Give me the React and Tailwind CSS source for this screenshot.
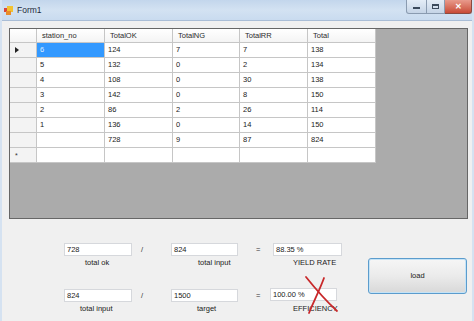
import React from "react";

const cols = ["station_no", "TotalOK", "TotalNG", "TotalRR", "Total"];
const rows = [
    ["6", "124", "7", "7", "138"],
    ["5", "132", "0", "2", "134"],
    ["4", "108", "0", "30", "138"],
    ["3", "142", "0", "8", "150"],
    ["2", "86", "2", "26", "114"],
    ["1", "136", "0", "14", "150"],
    ["", "728", "9", "87", "824"],
    ["", "", "", "", ""],
];

const cell = "h-[15px] border-r border-b border-[#c6c6c6] px-[3px] leading-[14px] text-[7.5px] text-[#1a1a1a]";
const head = "h-[14px] border-r border-b border-[#c6c6c6] px-[5px] leading-[13px] text-[7.5px] text-[#2a2a2a] bg-gradient-to-b from-white to-[#f4f4f4]";

function TitleBar() {
    return (
        <div className="h-[21px] flex items-start bg-gradient-to-b from-[#c3d6ec] via-[#d3e2f2] to-[#c9dbef] border-b border-[#a9bdd6]">
            <div className="flex items-center h-[20px] pl-[2px] gap-[4px]">
                <svg width="9" height="9" viewBox="0 0 9 9">
                    <rect x="0" y="2" width="4" height="4" fill="#d9463b" />
                    <rect x="3" y="0" width="6" height="6" fill="#f2c230" />
                    <rect x="2" y="5" width="5" height="4" fill="#e98b2a" />
                </svg>
                <span className="text-[8.5px] text-[#1e2a3a]">Form1</span>
            </div>
            <div className="ml-auto flex h-[14px]">
                <div className="w-[21px] h-[14px] border border-t-0 border-[#8a9bb0] rounded-bl-[3px] bg-gradient-to-b from-[#e4edf7] to-[#c5d4e6] flex items-end justify-center pb-[4px]">
                    <div className="w-[7px] h-[2px] bg-[#3b4a5c]" />
                </div>
                <div className="w-[18px] h-[14px] border-b border-r border-[#8a9bb0] bg-gradient-to-b from-[#e4edf7] to-[#c5d4e6] flex items-center justify-center">
                    <div className="w-[7px] h-[5px] border border-t-2 border-[#3b4a5c]" />
                </div>
                <div className="w-[27px] h-[14px] border-b border-r border-[#8a4a40] rounded-br-[3px] bg-gradient-to-b from-[#e89a8c] to-[#c84a36] flex items-center justify-center">
                    <span className="text-[8px] font-bold text-white leading-none">✕</span>
                </div>
            </div>
        </div>
    );
}

function DataGrid() {
    return (
        <div className="ml-[7px] mt-[7px] w-[459px] h-[191px] bg-[#ababab] border border-[#666666]">
            <div className="grid grid-cols-[27px_68px_68px_67px_68px_68px] w-[366px] bg-white">
                <div className={head} />
                {cols.map((c) => (
                    <div key={c} className={head}>{c}</div>
                ))}
                {rows.map((r, i) => (
                    <React.Fragment key={i}>
                        <div className="h-[15px] border-r border-b border-[#c6c6c6] bg-[#f3f3f3] flex items-center pl-[5px]">
                            {i === 0 && (
                                <svg width="4" height="6" viewBox="0 0 4 6">
                                    <polygon points="0,0 4,3 0,6" fill="#222" />
                                </svg>
                            )}
                            {i === rows.length - 1 && (
                                <span className="text-[7px] leading-none text-[#333]">*</span>
                            )}
                        </div>
                        {r.map((v, j) => (
                            <div
                                key={j}
                                className={
                                    i === 0 && j === 0
                                        ? "h-[15px] border-r border-b border-[#c6c6c6] px-[3px] leading-[14px] text-[7.5px] bg-[#3399ff] text-[#dfeeff]"
                                        : cell
                                }
                            >
                                {v}
                            </div>
                        ))}
                    </React.Fragment>
                ))}
            </div>
        </div>
    );
}

function Box({ value, className = "" }) {
    return (
        <div className={`h-[13px] bg-white border border-[#d6d8dc] px-[2px] text-[7.5px] leading-[11px] text-[#1a1a1a] ${className}`}>
            {value}
        </div>
    );
}

function Op({ ch, w }) {
    return <div className={`${w} h-[13px] text-[7.5px] leading-[13px] text-[#333]`}>{ch}</div>;
}

function Label({ text, className }) {
    return <span className={`absolute top-0 text-[7.5px] leading-[12px] text-[#1a1a1a] whitespace-nowrap ${className}`}>{text}</span>;
}

export default function App() {
    return (
        <div
            className="relative w-[474px] h-[321px] overflow-hidden bg-[#f0f0f0] border-x-2 border-[#d5e2f1] flex flex-col"
            style={{ fontFamily: '"Liberation Sans", Arial, sans-serif' }}
        >
            <TitleBar />
            <DataGrid />

            <div className="flex pt-[24px]">
                <div className="flex flex-col pl-[62px]">
                    <div className="flex">
                        <Box value="728" className="w-[68px]" />
                        <Op ch="/" w="w-[39px] pl-[9px]" />
                        <Box value="824" className="w-[67px]" />
                        <Op ch="=" w="w-[35px] pl-[18px]" />
                        <Box value="88.35 %" className="w-[69px]" />
                    </div>
                    <div className="relative h-[12px] mt-[1px]">
                        <Label text="total ok" className="left-[21px]" />
                        <Label text="total input" className="left-[134px]" />
                        <Label text="YIELD RATE" className="left-[229px]" />
                    </div>
                    <div className="flex mt-[20px]">
                        <Box value="824" className="w-[68px]" />
                        <Op ch="/" w="w-[39px] pl-[9px]" />
                        <Box value="1500" className="w-[67px]" />
                        <Op ch="=" w="w-[32px] pl-[18px]" />
                        <Box value="100.00 %" className="w-[67px] -mt-[1px]" />
                    </div>
                    <div className="relative h-[12px] mt-[1px]">
                        <Label text="total input" className="left-[16px]" />
                        <Label text="target" className="left-[133px]" />
                        <Label text="EFFICIENCY" className="left-[229px] -top-[2px]" />
                    </div>
                </div>
                <button className="ml-[26px] mt-[15px] w-[99px] h-[36px] rounded-[3px] border border-[#5b9ccd] shadow-[inset_0_0_0_1px_#c5e3f6] bg-gradient-to-b from-[#f6f6f6] via-[#ebebeb] to-[#d8d8d8] text-[7.5px] text-[#1a1a1a]">
                    load
                </button>
            </div>

            <svg className="absolute left-[298px] top-[273px]" width="42" height="44" viewBox="0 0 42 44">
                <path d="M6 4 C14 14, 24 26, 37 38" stroke="#c8282a" strokeWidth="1.8" fill="none" strokeLinecap="round" />
                <path d="M24 5 C20 16, 14 28, 9 40" stroke="#c8282a" strokeWidth="1.8" fill="none" strokeLinecap="round" />
            </svg>
        </div>
    );
}
